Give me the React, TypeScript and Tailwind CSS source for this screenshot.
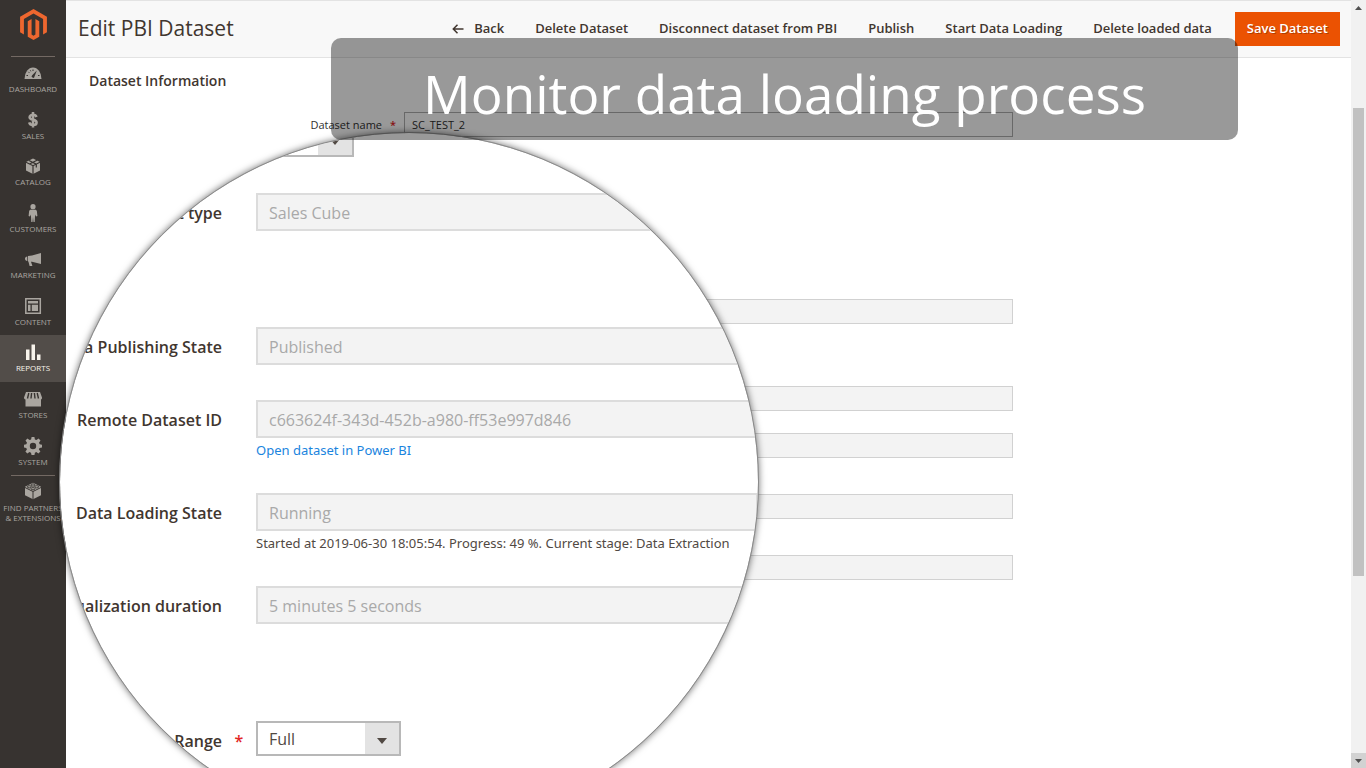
import React from 'react';

interface NavItem {
  label: string;
  icon: React.ReactNode;
  active?: boolean;
}

interface ZoomField {
  id: string;
  label: string;
  value: string;
  spacing: string;
  hint?: React.ReactNode;
}

const navItems: NavItem[] = [
  {
    label: 'DASHBOARD',
    icon: (
      <>
        <path fill="currentColor" d="M.5 15a8.500 11.500 0 1 1 17 0z" />
        <path fill="none" stroke="#373330" strokeWidth="1" d="M2.500 11.500h1.500M4.300 7.800l1 1M9 5.500V7M15.500 11.500H14M6.300 6.300l.5 1" />
        <path fill="#373330" d="M12.800 6.500l-2.300 6a1.400 1.400 0 1 1-2.300-1.200z" />
      </>
    ),
  },
  {
    label: 'SALES',
    icon: (
      <path
        fill="none"
        stroke="currentColor"
        strokeWidth="2.500"
        d="M12.500 6C12 4.500 10.800 3.800 9 3.800 7 3.800 5.600 4.700 5.600 6.200c0 3.600 7 1.600 7 5.200 0 1.600-1.500 2.600-3.600 2.600-2 0-3.400-.9-3.800-2.600M9 1v15.500"
      />
    ),
  },
  {
    label: 'CATALOG',
    icon: (
      <>
        <path fill="currentColor" d="M9 1.500l7 3.500v8.500l-7 3.500-7-3.500V5z" />
        <path fill="none" stroke="#373330" strokeWidth="1.200" d="M2 5.300l7 3.400 7-3.400M9 8.700V17M5 3.500l7.300 3.600v3.400M5.500 7L13 3.300" />
      </>
    ),
  },
  {
    label: 'CUSTOMERS',
    icon: (
      <>
        <circle cx="9" cy="2.700" r="2.600" fill="currentColor" />
        <path fill="currentColor" d="M6.800 5.800h4.400c1 0 1.500.6 1.700 1.500l.5 4.700-1.400.5-.9-2-.4 7.500H9.500L9 13l-.5 5H7.300l-.4-7.500-.9 2-1.400-.5.500-4.700c.2-.9.700-1.500 1.700-1.500z" />
      </>
    ),
  },
  {
    label: 'MARKETING',
    icon: (
      <path
        fill="currentColor"
        d="M17 3v11l-9-2.300H7l1.400 4.300H5.600L4.400 11.500H4V6l4-.6zM3.300 6.500v4.500C1.800 11 1 10 1 8.800s.8-2.300 2.300-2.300z"
      />
    ),
  },
  {
    label: 'CONTENT',
    icon: (
      <>
        <path fill="none" stroke="currentColor" strokeWidth="1.500" d="M1.800 1.800h14.500v14.500H1.800z" />
        <path fill="currentColor" d="M4 4h10v2.500H4zM4 7.800h2.500V14H4zM7.800 7.800H14V14H7.800z" />
      </>
    ),
  },
  {
    label: 'REPORTS',
    active: true,
    icon: <path fill="currentColor" d="M2 6.500h3.500V17H2zM7.500 1.500H11V17H7.500zM13 11.500h3.500V17H13z" />,
  },
  {
    label: 'STORES',
    icon: (
      <>
        <path fill="currentColor" d="M2 2h14l2 5.500a2 2 0 0 1-1 2V16.500H1.500V9.500A2 2 0 0 1 0 7.500z" />
        <path fill="none" stroke="#373330" strokeWidth="1.400" d="M4.800 3L3.500 8.500M7.600 3L7 8.500M10.400 3l.6 5.500M13.200 3l1.300 5.500" />
      </>
    ),
  },
  {
    label: 'SYSTEM',
    icon: (
      <path
        fill="currentColor"
        fillRule="evenodd"
        d="M7.600 0h2.800l.5 2.500 1.500.6 2.200-1.500 1.900 2-1.500 2.100.7 1.500 2.300.5v2.700l-2.500.5-.6 1.500 1.500 2.200-2 1.900-2.100-1.400-1.400.6-.5 2.600H7.600L7 15.700l-1.500-.6-2.200 1.400-1.900-1.900 1.500-2.200-.6-1.500L0 10.400V7.700l2.300-.5L3 5.700 1.500 3.600l1.900-2 2.200 1.500 1.500-.6zM9 5.800a3.200 3.200 0 1 0 0 6.400 3.200 3.200 0 0 0 0-6.400z"
      />
    ),
  },
];

const headerActions = [
  'Delete Dataset',
  'Disconnect dataset from PBI',
  'Publish',
  'Start Data Loading',
  'Delete loaded data',
];

// Disabled inputs below the dataset name, with the space above each one
const lockedFields = [
  { name: 'Dataset type', spacing: 'mt-[162px]' },
  { name: 'Data Publishing State', spacing: 'mt-[62px]' },
  { name: 'Remote Dataset ID', spacing: 'mt-[22px]' },
  { name: 'Data Loading State', spacing: 'mt-9' },
  { name: 'Actualization duration', spacing: 'mt-9' },
];

const zoomFields: ZoomField[] = [
  { id: 'type', label: 'Dataset type', value: 'Sales Cube', spacing: 'mt-9' },
  { id: 'publishing', label: 'Data Publishing State', value: 'Published', spacing: 'mt-24' },
  {
    id: 'remote-id',
    label: 'Remote Dataset ID',
    value: 'c663624f-343d-452b-a980-ff53e997d846',
    spacing: 'mt-[35px]',
    hint: (
      <a href="#" className="text-[#1a84de]">
        Open dataset in Power BI
      </a>
    ),
  },
  {
    id: 'loading',
    label: 'Data Loading State',
    value: 'Running',
    spacing: 'mt-[35px]',
    hint: 'Started at 2019-06-30 18:05:54. Progress: 49 %. Current stage: Data Extraction',
  },
  { id: 'duration', label: 'Actualization duration', value: '5 minutes 5 seconds', spacing: 'mt-[35px]' },
];

const Sidebar: React.FC = () => (
  <aside className="w-[66px] shrink-0 bg-[#373330] text-[#aaa6a0] flex flex-col items-stretch">
    <a href="#" aria-label="Magento" className="h-14 pt-[9px] flex justify-center items-start">
      <svg viewBox="0 0 24 24" className="w-[31px] h-[31px]" fill="#ee672f">
        <path d="M12 24l-4.455-2.572v-12l2.970-1.715v12.001l1.485.902 1.485-.902V7.713l2.971 1.715v12L12 24zM22.391 6v12l-2.969 1.714V7.713L12 3.430 4.574 7.713v12.001L1.609 18V6L12.001 0l10.390 6z" />
      </svg>
    </a>
    <div className="mx-[11px] h-px -mb-px bg-[#736963]" />
    <nav className="h-[419px] flex flex-col">
      {navItems.map(item => (
        <a
          key={item.label}
          href="#"
          className={`flex-1 flex flex-col items-center pt-2 ${item.active ? 'bg-[#524d49] text-[#f7f3eb]' : ''}`}
        >
          <svg viewBox="0 0 18 18" className="w-[18px] h-[18px] shrink-0">
            {item.icon}
          </svg>
          <span className="text-[8px] leading-[10px] mt-0.5">{item.label}</span>
        </a>
      ))}
    </nav>
    <div className="mx-[11px] h-px bg-[#736963]" />
    <a href="#" className="flex flex-col items-center pt-1.5">
      <svg viewBox="0 0 18 18" className="w-[18px] h-[18px]">
        <path fill="currentColor" d="M9 .8l8 4v8.400l-8 4-8-4V4.800z" />
        <path fill="none" stroke="#373330" strokeWidth="1" d="M1 5.500l8 4 8-4M9 9.500V17" />
        <g fill="currentColor" stroke="#373330" strokeWidth=".9">
          <ellipse cx="9" cy="3" rx="2" ry="1.100" />
          <ellipse cx="5.300" cy="4.800" rx="2" ry="1.100" />
          <ellipse cx="12.700" cy="4.800" rx="2" ry="1.100" />
          <ellipse cx="9" cy="6.700" rx="2" ry="1.100" />
        </g>
      </svg>
      <span className="text-[8px] leading-[10px] text-center whitespace-nowrap mt-[3px]">
        FIND PARTNERS
        <br />& EXTENSIONS
      </span>
    </a>
  </aside>
);

const PageHeader: React.FC = () => (
  <header className="h-[58px] border-y border-[#e3e3e3] bg-[#f8f8f8] flex items-center justify-between pl-3 pr-[11px]">
    <h1 className="text-[21px] leading-7 pb-0.5 text-[#41362f] whitespace-nowrap">Edit PBI Dataset</h1>
    <div className="flex items-center gap-[23px] text-[13px] font-semibold text-[#41362f] whitespace-nowrap">
      <div className="flex items-center gap-[31px]">
        <button className="flex items-center gap-2.5">
          <svg viewBox="0 0 12 12" className="w-3 h-3" fill="none" stroke="currentColor" strokeWidth="1.500">
            <path d="M11.500 6H1.500M5.500 1.800L1.300 6l4.200 4.200" />
          </svg>
          Back
        </button>
        {headerActions.map(action => (
          <button key={action}>{action}</button>
        ))}
      </div>
      <button className="h-[34px] px-3 bg-[#eb5202] text-white [text-shadow:1px_1px_0_rgba(0,0,0,0.25)]">
        Save Dataset
      </button>
    </div>
  </header>
);

const DatasetForm: React.FC = () => (
  <section className="px-[23px] pt-[13px]">
    <h2 className="text-sm leading-5 font-semibold text-[#41362f]">Dataset Information</h2>
    <div className="mt-[21px] flex flex-col">
      <div className="flex items-center">
        <label htmlFor="dataset-name" className="w-[293px] pt-0.5 text-right text-[11px] font-medium text-[#303030]">
          Dataset name
        </label>
        <span className="w-[22px] pt-0.5 text-center text-[11px] font-semibold text-[#e22626]">*</span>
        <input
          id="dataset-name"
          type="text"
          defaultValue="SC_TEST_2"
          className="h-[25px] flex-1 max-w-[609px] border border-[#adadad] px-[7px] text-[11px] text-[#303030]"
        />
      </div>
      {lockedFields.map(field => (
        <div key={field.name} className={`flex pl-[315px] ${field.spacing}`}>
          <input
            type="text"
            disabled
            aria-label={field.name}
            className="h-[25px] flex-1 max-w-[609px] border border-[#d1d1d1] bg-[#f3f3f3]"
          />
        </div>
      ))}
    </div>
  </section>
);

interface ZoomSelectProps {
  id: string;
  value: string;
  width: string;
}

const ZoomSelect: React.FC<ZoomSelectProps> = ({ id, value, width }) => (
  <div className={`grid h-[35px] border-2 border-[#b8b8b8] bg-white ${width}`}>
    <select
      id={id}
      aria-label={value ? undefined : 'Enabled'}
      defaultValue={value}
      className="col-start-1 row-start-1 appearance-none pl-[11px] text-base leading-5 text-[#514943]"
    >
      <option>{value}</option>
    </select>
    <span className="col-start-1 row-start-1 justify-self-end w-[34px] bg-[#e3e3e3] flex items-center justify-center pointer-events-none">
      <svg viewBox="0 0 10 6" className="w-2.5 h-1.5 mt-1" fill="#514943">
        <path d="M0 0h10L5 6z" />
      </svg>
    </span>
  </div>
);

const Magnifier: React.FC = () => (
  <div className="absolute left-[60px] top-[133px] w-[698px] h-[698px] rounded-full bg-white overflow-hidden outline outline-[#8a8a8a] shadow-[0_0_7px_1px_rgba(0,0,0,0.55)] text-[#41362f]">
    <div className="-mt-[11px] flex flex-col">
      <div className="pl-[196px]">
        <ZoomSelect id="zoom-enabled" value="" width="w-[98px]" />
      </div>
      {zoomFields.map(field => (
        <div key={field.id} className={`flex ${field.spacing}`}>
          <label
            htmlFor={field.id}
            className="w-[162px] mr-[34px] pt-0.5 shrink-0 h-[38px] flex items-center justify-end whitespace-nowrap text-base font-semibold"
          >
            {field.label}
          </label>
          <div className="flex-1">
            <input
              id={field.id}
              type="text"
              disabled
              value={field.value}
              className="block w-full h-[38px] border-2 border-[#dcdcdc] bg-[#f3f3f3] px-[11px] pt-px text-base text-[#a9a9a9]"
            />
            {field.hint && (
              <p className="h-5 font-['Noto_Sans',sans-serif] text-[13px] leading-6 whitespace-nowrap text-[#514943]">
                {field.hint}
              </p>
            )}
          </div>
        </div>
      ))}
      <div className="mt-[97px] flex items-center">
        <label htmlFor="zoom-range" className="w-[162px] pt-1 text-right text-base font-semibold">
          Data Range
        </label>
        <span className="w-[34px] pt-1 text-center text-base font-semibold text-[#e22626]">*</span>
        <ZoomSelect id="zoom-range" value="Full" width="w-[145px]" />
      </div>
    </div>
  </div>
);

const Scrollbar: React.FC = () => (
  <div className="w-[15px] shrink-0 bg-[#f1f1f1] flex flex-col" aria-hidden="true">
    <div className="h-[15px] flex items-center justify-center">
      <svg viewBox="0 0 7 4" className="w-[7px] h-1" fill="#505050">
        <path d="M3.500 0L7 4H0z" />
      </svg>
    </div>
    <div className="flex-[93]" />
    <div className="flex-[468] mx-0.5 bg-[#c1c1c1]" />
    <div className="flex-[177]" />
    <div className="h-[15px] bg-[#d2d2d2] flex items-center justify-center">
      <svg viewBox="0 0 7 4" className="w-[7px] h-1" fill="#505050">
        <path d="M0 0h7L3.500 4z" />
      </svg>
    </div>
  </div>
);

const App: React.FC = () => {
  return (
    <div className="relative h-screen overflow-hidden flex bg-white font-['Open_Sans',sans-serif]">
      <Sidebar />
      <main className="flex-1 min-w-0">
        <PageHeader />
        <DatasetForm />
      </main>
      <Scrollbar />
      <Magnifier />
      <div className="absolute left-[331px] right-32 top-[38px] h-[102px] pt-2 rounded-[10px] bg-black/40 flex items-center justify-center">
        <p className="text-[53px] leading-none text-white whitespace-nowrap">Monitor data loading process</p>
      </div>
    </div>
  );
};

export default App;
